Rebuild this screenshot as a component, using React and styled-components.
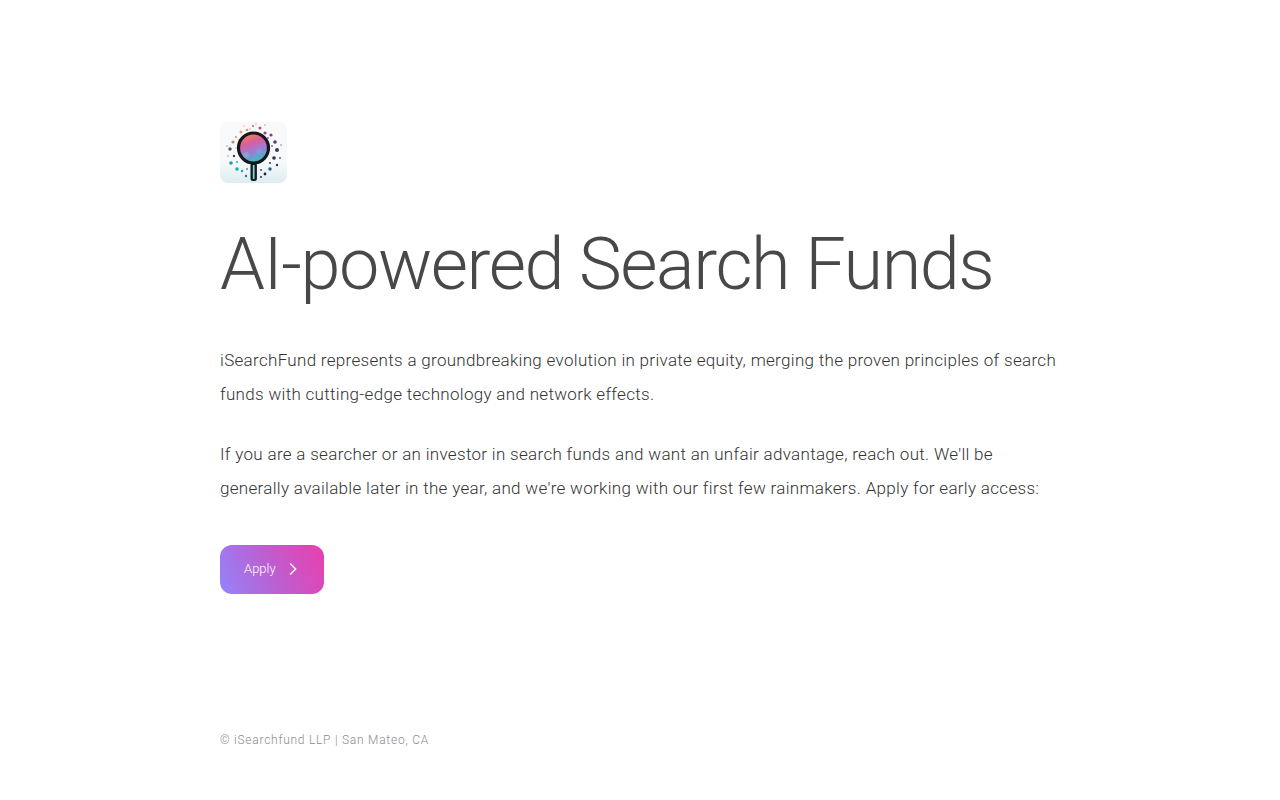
import React from "react";
import styled, { createGlobalStyle } from "styled-components";

const Global = createGlobalStyle`
  html, body { margin: 0; padding: 0; background: #fff; }
  body { font-family: Roboto, "Liberation Sans", sans-serif; }
`;
const Page = styled.main`
  width: 840px;
  margin: 0 auto;
  padding-top: 122px;
  height: 800px;
  box-sizing: border-box;
  display: flex;
  flex-direction: column;
  align-items: flex-start;
`;
const LogoBox = styled.div`
  width: 67px;
  height: 61px;
  border-radius: 8px;
  overflow: hidden;
  display: block;
`;
const Heading = styled.h1`
  margin: 37px 0 0;
  font-size: 72px;
  line-height: 90px;
  font-weight: 300;
  letter-spacing: -1.45px;
  color: #484848;
  white-space: nowrap;
`;
const Para = styled.p`
  margin: ${(p) => p.$top}px 0 0;
  font-size: 17px;
  line-height: 33.5px;
  font-weight: 300;
  letter-spacing: 0.31px;
  color: #333;
  white-space: nowrap;
`;
const ApplyButton = styled.a`
  margin-top: 40px;
  width: 104px;
  height: 49px;
  box-sizing: border-box;
  padding: 0 0 2px 24px;
  border-radius: 12px;
  display: flex;
  align-items: center;
  gap: 11px;
  background: linear-gradient(65deg, #9384fb 0%, #bb60d2 48%, #ea3eae 100%);
  color: #fff;
  font-size: 13px;
  font-weight: 300;
  text-decoration: none;
`;
const Footer = styled.footer`
  margin-top: 136px;
  font-size: 12px;
  line-height: 20px;
  font-weight: 300;
  letter-spacing: 0.75px;
  color: #8c8c8c;
`;

const dots = [
  [33, 4, "#e06a50", 1.1], [27, 8, "#e89070", 1.3], [40, 6, "#c84a6a", 1.5], [21, 10, "#eba070", 1.5], [45, 11, "#b03a70", 1.6],
  [16, 15, "#d8905a", 1], [51, 13, "#8a3a80", 1.6], [13, 20, "#b89070", 1.6], [55, 20, "#5a3a80", 1.8], [10, 27, "#555", 1.7],
  [57, 28, "#333a50", 2], [14, 34, "#445", 1.2], [54, 36, "#334", 1.8], [11, 41, "#25a0a5", 1.8], [57, 43, "#336", 1.2],
  [17, 47, "#18b0b5", 1.8], [50, 47, "#2a5a80", 1.7], [22, 49, "#28a0b0", 1.2], [45, 52, "#224", 1.4], [26, 54, "#1a808a", 1.2],
  [41, 55, "#334", 1], [8, 34, "#50c0c0", 0.8], [60, 36, "#546", 0.9], [17, 40, "#2ab0b0", 1.1], [50, 41, "#447", 1.1], [30, 7, "#ea9a9a", 0.8],
  [36, 2, "#e88", 0.7], [27, 47, "#4a9ab0", 1], [41, 48, "#557", 1.1], [16, 26, "#dca080", 0.8], [52, 24, "#944a90", 0.9],
  [19, 18, "#e8b080", 0.9], [48, 16, "#b0508a", 0.9], [7, 24, "#888", 0.7], [61, 23, "#666", 0.7], [24, 4, "#eab090", 0.7], [45, 3, "#d87090", 0.7]
];

const Logo = () => (
  <svg width="67" height="61" viewBox="0 0 67 61" role="img" aria-label="iSearchFund logo">
    <defs>
      <linearGradient id="bg" x1="0" y1="0" x2="0" y2="1">
        <stop offset="0" stopColor="#f8f9fa" />
        <stop offset="0.65" stopColor="#f7f9fa" />
        <stop offset="1" stopColor="#dcedf2" />
      </linearGradient>
      <linearGradient id="lens" x1="0.25" y1="0" x2="0.6" y2="1">
        <stop offset="0" stopColor="#ec8a4e" />
        <stop offset="0.32" stopColor="#dc5e9a" />
        <stop offset="0.62" stopColor="#a07ad6" />
        <stop offset="1" stopColor="#28ccbc" />
      </linearGradient>
      <filter id="soft" x="-5%" y="-5%" width="110%" height="110%"><feGaussianBlur stdDeviation="0.55" /></filter>
    </defs>
    <rect width="67" height="61" fill="url(#bg)" />
    <g filter="url(#soft)">
      {dots.map(([x, y, c, r], i) => (
        <circle key={i} cx={x} cy={y} r={r} fill={c} />
      ))}
      <rect x="30.5" y="41" width="6.4" height="18" rx="2.5" fill="#0e1a20" />
      <rect x="32.8" y="43" width="1.8" height="14" fill="#8accd0" />
      <circle cx="33.5" cy="26" r="15" fill="url(#lens)" stroke="#12161c" strokeWidth="3.2" />
      <circle cx="26" cy="33" r="3" fill="#60d8c8" opacity="0.4" />
      <circle cx="39" cy="29" r="3" fill="#6ab0e8" opacity="0.4" />
    </g>
  </svg>
);

const Chevron = () => (
  <svg width="12" height="14" viewBox="0 0 12 14" fill="none" stroke="#fff" strokeWidth="1.4">
    <path d="M3.2 1.5L8.7 7l-5.5 5.5" />
  </svg>
);

export default function App() {
  return (
    <>
      <Global />
      <Page>
        <LogoBox><Logo /></LogoBox>
        <Heading>AI-powered Search Funds</Heading>
        <Para $top={34}>
          iSearchFund represents a groundbreaking evolution in private equity, merging the proven principles of search
          <br />
          funds with cutting-edge technology and network effects.
        </Para>
        <Para $top={27}>
          If you are a searcher or an investor in search funds and want an unfair advantage, reach out. We'll be
          <br />
          generally available later in the year, and we're working with our first few rainmakers. Apply for early access:
        </Para>
        <ApplyButton href="#apply">Apply <Chevron /></ApplyButton>
        <Footer>© iSearchfund LLP | San Mateo, CA</Footer>
      </Page>
    </>
  );
}
